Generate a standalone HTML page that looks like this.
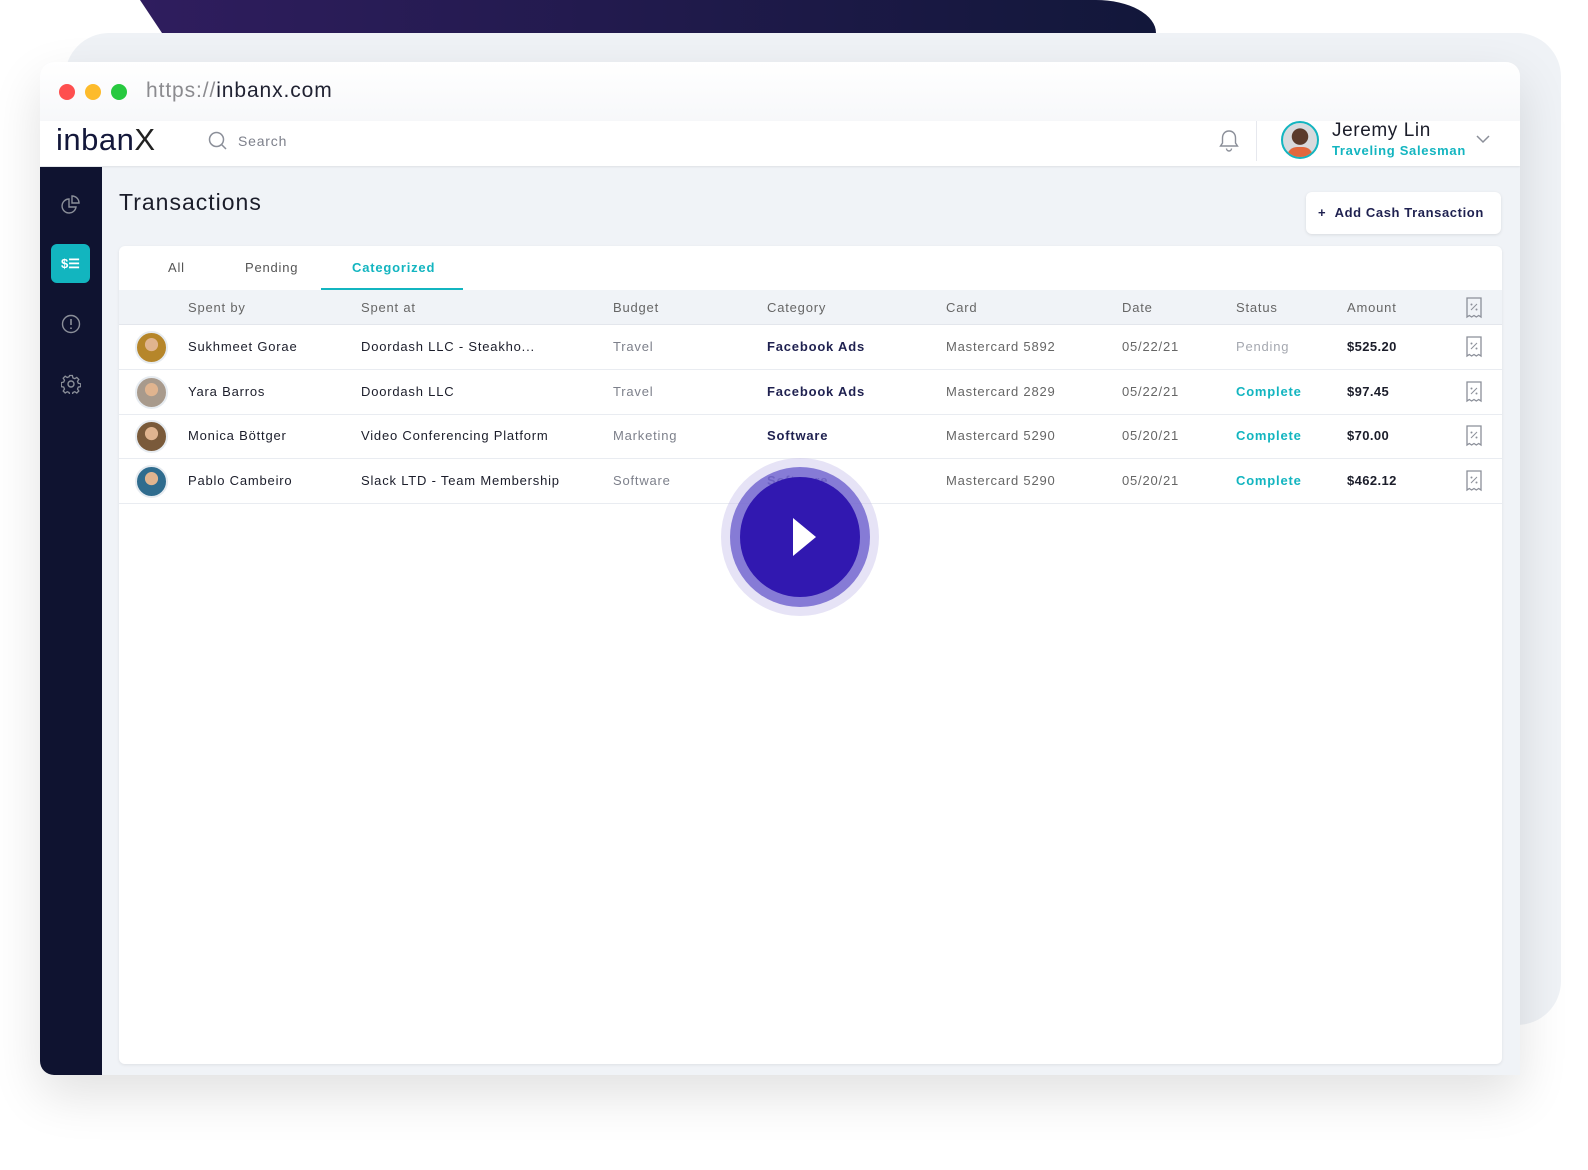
<!DOCTYPE html>
<html><head><meta charset="utf-8"><style>
*{margin:0;padding:0;box-sizing:border-box}
body{width:1588px;height:1170px;background:#fff;position:relative;overflow:hidden;font-family:"Liberation Sans",sans-serif;color:#1b1d2a}
.abs{position:absolute}
.purple{left:140px;top:0;width:1016px;height:33px;background:linear-gradient(90deg,#2f1d5e,#12173a);clip-path:polygon(0 0,100% 0,100% 100%,22px 100%);border-top-right-radius:60px 33px}
.back{left:65px;top:33px;width:1496px;height:992px;background:#eff2f6;border-radius:44px}
.win{left:40px;top:62px;width:1480px;height:1013px;background:#f0f3f7;border-radius:14px 14px 0 14px;overflow:hidden;box-shadow:0 20px 50px rgba(0,0,0,.12)}
.title{left:0;top:0;width:1480px;height:59px;background:linear-gradient(#fff,#f7f8fa)}
.dot{width:16px;height:16px;border-radius:50%;top:22px}
.url{left:106px;top:17px;font-size:21px;letter-spacing:.9px;color:#202232}
.hdr{left:0;top:59px;width:1480px;height:45px;background:#fff;box-shadow:0 1px 2px rgba(0,0,0,.08)}
.side{left:0;top:105px;width:62px;height:910px;background:#0f1330}
.t{position:absolute;font-size:13px;letter-spacing:.8px;white-space:nowrap;line-height:16px}
.card{left:79px;top:184px;width:1383px;height:818px;background:#fff;border-radius:6px;box-shadow:0 1px 3px rgba(0,0,0,.08)}
.g{color:#7d808b}
.teal{color:#13b5c0;font-weight:bold}
.nav{color:#1f2150;font-weight:bold}
</style></head><body>
<div class="abs purple"></div>
<div class="abs back"></div>
<div class="abs win">
 <div class="abs title"></div>
 <div class="abs dot" style="left:19px;background:#fe4f4f"></div>
 <div class="abs dot" style="left:45px;background:#fdbb2b"></div>
 <div class="abs dot" style="left:71px;background:#27c93f"></div>
 <div class="abs url"><span style="color:#8b8b8f">https://</span>inbanx.com</div>
 <div class="abs hdr">
  <div class="abs" style="left:16px;top:1px;font-size:31px;letter-spacing:.5px;color:#13173a">inban<span style="font-weight:300;color:#222">X</span></div>
  <svg class="abs" style="left:168px;top:10px" width="20" height="20" viewBox="0 0 20 20"><circle cx="8.5" cy="8.5" r="7" fill="none" stroke="#8b8f99" stroke-width="1.5"/><path d="M13.5 13.5L18 18" stroke="#8b8f99" stroke-width="1.5"/></svg>
  <div class="t g" style="left:198px;top:12px;font-size:14px">Search</div>
  <svg class="abs" style="left:1178px;top:8px" width="22" height="24" viewBox="0 0 22 24"><path d="M11 2c-4 0-6.5 3-6.5 7v5l-2 3h17l-2-3V9c0-4-2.5-7-6.5-7zM8.5 19.5a2.5 2.5 0 005 0" fill="none" stroke="#8b8f99" stroke-width="1.4"/></svg>
  <div class="abs" style="left:1216px;top:0;width:1px;height:40px;background:#e6e8ee"></div>
  <div class="abs" style="left:1241px;top:0;width:38px;height:38px;border-radius:50%;border:2px solid #13b5c0;background:radial-gradient(circle at 50% 40%,#5a3b2c 30%,#d8dadd 32%);overflow:hidden"><div style="position:absolute;left:4px;top:24px;width:26px;height:14px;background:#e2683e;border-radius:10px 10px 0 0"></div></div>
  <div class="abs" style="left:1292px;top:-1px;font-size:19px;letter-spacing:.6px">Jeremy Lin</div>
  <div class="abs teal" style="left:1292px;top:22px;font-size:13px;letter-spacing:.7px">Traveling Salesman</div>
  <svg class="abs" style="left:1436px;top:13px" width="14" height="10"><path d="M1 2l6 6 6-6" fill="none" stroke="#8b8f99" stroke-width="1.5"/></svg>
 </div>
 <div class="abs side">
  <svg class="abs" style="left:21px;top:28px" width="20" height="20" viewBox="0 0 20 20"><path d="M8 4a7 7 0 107 8H8z" fill="none" stroke="#8b8f99" stroke-width="1.4"/><path d="M11 1a7 7 0 017 7h-7z" fill="none" stroke="#8b8f99" stroke-width="1.4"/></svg>
  <div class="abs" style="left:11px;top:77px;width:39px;height:39px;border-radius:6px;background:#12b5bf;color:#fff;font-size:13px;font-weight:bold;text-align:center;line-height:39px">$☰</div>
  <svg class="abs" style="left:21px;top:147px" width="20" height="20"><circle cx="10" cy="10" r="8.5" fill="none" stroke="#8b8f99" stroke-width="1.4"/><path d="M10 5v6M10 13.5v1.5" stroke="#8b8f99" stroke-width="1.6"/></svg>
  <svg class="abs" style="left:21px;top:207px" width="20" height="20" viewBox="0 0 20 20"><circle cx="10" cy="10" r="3" fill="none" stroke="#8b8f99" stroke-width="1.4"/><path d="M8.6 1.5h2.8l.5 2.4 1.9.8 2-1.3 2 2-1.3 2 .8 1.9 2.4.5v2.8l-2.4.5-.8 1.9 1.3 2-2 2-2-1.3-1.9.8-.5 2.4H8.6l-.5-2.4-1.9-.8-2 1.3-2-2 1.3-2-.8-1.9-2.4-.5V8.6l2.4-.5.8-1.9-1.3-2 2-2 2 1.3 1.9-.8z" fill="none" stroke="#8b8f99" stroke-width="1.3"/></svg>
 </div>
 <div class="abs" style="left:79px;top:127px;font-size:23px;letter-spacing:1px">Transactions</div>
 <div class="abs" style="left:1266px;top:130px;width:195px;height:42px;background:#fff;border-radius:6px;box-shadow:0 1px 3px rgba(0,0,0,.1)"><div class="t nav" style="left:12px;top:13px;font-size:13px;letter-spacing:.6px">+ &nbsp;Add Cash Transaction</div></div>
 <div class="abs card">
  <div class="t g" style="left:49px;top:14px;color:#555">All</div>
  <div class="t g" style="left:126px;top:14px;color:#555">Pending</div>
  <div class="t teal" style="left:233px;top:14px">Categorized</div>
  <div class="abs" style="left:202px;top:42px;width:142px;height:2px;background:#13b5c0"></div>
  <div class="abs" style="left:0;top:44px;width:1383px;height:35px;background:#f0f3f7;border-bottom:1px solid #e3e6ec">
   <div class="t g" style="left:69px;top:10px;color:#666">Spent by</div>
   <div class="t g" style="left:242px;top:10px;color:#666">Spent at</div>
   <div class="t g" style="left:494px;top:10px;color:#666">Budget</div>
   <div class="t g" style="left:648px;top:10px;color:#666">Category</div>
   <div class="t g" style="left:827px;top:10px;color:#666">Card</div>
   <div class="t g" style="left:1003px;top:10px;color:#666">Date</div>
   <div class="t g" style="left:1117px;top:10px;color:#666">Status</div>
   <div class="t g" style="left:1228px;top:10px;color:#666">Amount</div>
   <svg class="abs" style="left:1347px;top:7px" width="16" height="22"><path d="M1 1h14v19l-2.3-1.5-2.4 1.5-2.3-1.5-2.4 1.5L3.3 18.5 1 20z" fill="none" stroke="#8b8f99" stroke-width="1.3"/><path d="M5 13l6-6" stroke="#8b8f99"/><circle cx="5.5" cy="7.5" r="1" fill="#8b8f99"/><circle cx="10.5" cy="12.5" r="1" fill="#8b8f99"/></svg>
  </div>
 </div>
</div>
<div id="rows"></div>
<script>
const R=[["Sukhmeet Gorae","Doordash LLC - Steakho...","Travel","Facebook Ads","Mastercard 5892","05/22/21","Pending","$525.20","#b6862a"],
["Yara Barros","Doordash LLC","Travel","Facebook Ads","Mastercard 2829","05/22/21","Complete","$97.45","#a89a8c"],
["Monica Böttger","Video Conferencing Platform","Marketing","Software","Mastercard 5290","05/20/21","Complete","$70.00","#7a5a3a"],
["Pablo Cambeiro","Slack LTD - Team Membership","Software","Software","Mastercard 5290","05/20/21","Complete","$462.12","#2f6c8e"]];
let h="";const ys=[347,392,436,481];
R.forEach((r,i)=>{const y=ys[i];
h+=`<div class="abs" style="left:119px;top:${y+22}px;width:1383px;height:1px;background:#e9ecf1"></div>
<div class="abs" style="left:135px;top:${y-16}px;width:33px;height:33px;border-radius:50%;border:2px solid #e6ebf0;background:radial-gradient(circle at 50% 40%,#e0b48f 28%,${r[8]} 30%)"></div>
<div class="t" style="left:188px;top:${y-8}px">${r[0]}</div>
<div class="t" style="left:361px;top:${y-8}px">${r[1]}</div>
<div class="t g" style="left:613px;top:${y-8}px">${r[2]}</div>
<div class="t nav" style="left:767px;top:${y-8}px">${r[3]}</div>
<div class="t g" style="left:946px;top:${y-8}px;color:#666">${r[4]}</div>
<div class="t g" style="left:1122px;top:${y-8}px;color:#666">${r[5]}</div>
<div class="t ${r[6]=="Pending"?"":"teal"}" style="left:1236px;top:${y-8}px;${r[6]=="Pending"?"color:#a5a8b0":""}">${r[6]}</div>
<div class="t" style="left:1347px;top:${y-8}px;font-weight:bold;letter-spacing:.4px">${r[7]}</div>
<svg class="abs" style="left:1466px;top:${y-11}px" width="16" height="22"><path d="M1 1h14v19l-2.3-1.5-2.4 1.5-2.3-1.5-2.4 1.5L3.3 18.5 1 20z" fill="none" stroke="#8b8f99" stroke-width="1.3"/><path d="M5 13l6-6" stroke="#8b8f99"/><circle cx="5.5" cy="7.5" r="1" fill="#8b8f99"/><circle cx="10.5" cy="12.5" r="1" fill="#8b8f99"/></svg>`;});
document.getElementById("rows").innerHTML=h;
</script>
<div class="abs" style="left:721px;top:458px;width:158px;height:158px;border-radius:50%;background:rgba(200,192,235,.45)"></div>
<div class="abs" style="left:730px;top:467px;width:140px;height:140px;border-radius:50%;background:rgba(110,96,206,.8)"></div>
<div class="abs" style="left:740px;top:477px;width:120px;height:120px;border-radius:50%;background:#3118b0"></div>
<svg class="abs" style="left:792px;top:517px" width="26" height="40"><path d="M1 1l23 19L1 39z" fill="#fff"/></svg>
</body></html>
